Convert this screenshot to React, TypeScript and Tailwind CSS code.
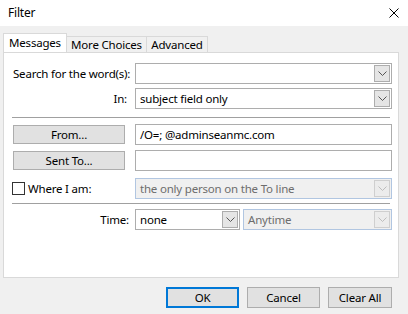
import React from "react";

const Chevron = ({ disabled }: { disabled?: boolean }) => (
  <div
    className={
      "flex h-[17px] w-[16px] items-center justify-center border " +
      (disabled ? "border-[#cfcfcf] bg-[#ececec]" : "border-[#adadad] bg-[#e5e5e5]")
    }
  >
    <svg width="9" height="5" viewBox="0 0 9 5">
      <path d="M0.5 0.5 L4.5 4.5 L8.5 0.5" fill="none" stroke={disabled ? "#bdbdbd" : "#555"} strokeWidth="1" />
    </svg>
  </div>
);

const Combo = ({ text, w, disabled }: { text?: string; w: string; disabled?: boolean }) => (
  <div
    className={
      "flex h-[21px] items-center justify-between border pl-[4px] pr-[1px] " +
      w +
      (disabled ? " border-[#b1c6e1] bg-[#f0f0f0] text-[#6d6d6d]" : " border-[#adadad] bg-white text-black")
    }
  >
    <span className="whitespace-nowrap leading-none">{text}</span>
    <Chevron disabled={disabled} />
  </div>
);

const TextBox = ({ text }: { text?: string }) => (
  <div className="flex h-[21px] w-[257px] items-center border border-[#adadad] bg-white pl-[4px] text-black">
    <span className="whitespace-nowrap leading-none">{text}</span>
  </div>
);

const Btn = ({ label }: { label: string }) => (
  <div className="flex h-[19px] w-[112px] items-center justify-center border border-[#adadad] bg-[#e1e1e1]">
    {label}
  </div>
);

export default function App() {
  return (
    <div
      className="h-[314px] w-[408px] overflow-hidden whitespace-nowrap bg-[#f0f0f0] text-[11.5px] tracking-[-0.2px] text-black"
      style={{ fontFamily: '"Noto Sans", "Open Sans", sans-serif' }}
    >
      <div className="flex h-[26px] items-center justify-between bg-white pl-[8px] pr-[9px]">
        <span className="text-[12px]">Filter</span>
        <svg width="10" height="10" viewBox="0 0 10 10">
          <path d="M0.5 0.5 L9.5 9.5 M9.5 0.5 L0.5 9.5" stroke="#000" strokeWidth="1" />
        </svg>
      </div>
      <div className="pl-[3px] pt-[8px]">
        <div className="relative z-10 flex h-[18px] items-end">
          <div className="flex h-[19px] w-[64px] items-center justify-center border border-b-0 border-[#d9d9d9] bg-white pb-[1px]">
            Messages
          </div>
          <div className="flex h-[16px] w-[80px] items-center justify-center border border-b-0 border-l-0 border-[#d9d9d9]">
            More Choices
          </div>
          <div className="flex h-[16px] w-[61px] items-center justify-center border border-b-0 border-l-0 border-[#d9d9d9]">
            Advanced
          </div>
        </div>
        <div className="h-[226px] w-[396px] border border-[#d9d9d9] bg-white pl-[8px]">
          <div className="mt-[10px] flex h-[21px] items-center">
            <div className="w-[123px] pl-[1px]">Search for the word(s):</div>
            <Combo w="w-[257px]" />
          </div>
          <div className="mt-[4px] flex h-[21px] items-center">
            <div className="w-[123px] pr-[8px] text-right">In:</div>
            <Combo w="w-[257px]" text="subject field only" />
          </div>
          <div className="mt-[8px] h-px w-[378px] bg-[#a0a0a0]" />
          <div className="mt-[6px] flex h-[21px] items-center">
            <div className="w-[123px] pl-[1px]">
              <Btn label="From..." />
            </div>
            <TextBox text="/O=; @adminseanmc.com" />
          </div>
          <div className="mt-[5px] flex h-[21px] items-center">
            <div className="w-[123px] pl-[1px]">
              <Btn label="Sent To..." />
            </div>
            <TextBox />
          </div>
          <div className="mt-[7px] flex h-[21px] items-center">
            <div className="flex w-[123px] items-center">
              <div className="h-[13px] w-[13px] border border-[#333] bg-white" />
              <span className="ml-[3px]">Where I am:</span>
            </div>
            <Combo w="w-[257px]" text="the only person on the To line" disabled />
          </div>
          <div className="mt-[4px] h-px w-[378px] bg-[#a0a0a0]" />
          <div className="mt-[5px] flex h-[21px] items-center">
            <div className="w-[123px] pr-[6px] text-right">Time:</div>
            <Combo w="w-[105px]" text="none" />
            <div className="ml-[3px]">
              <Combo w="w-[149px]" text="Anytime" disabled />
            </div>
          </div>
        </div>
      </div>
      <div className="mt-[9px] flex justify-end gap-[8px] pr-[16px]">
        <div className="flex h-[21px] w-[73px] items-center justify-center border-2 border-[#0078d7] bg-[#e1e1e1]">OK</div>
        <div className="flex h-[21px] w-[73px] items-center justify-center border border-[#adadad] bg-[#e1e1e1]">Cancel</div>
        <div className="flex h-[21px] w-[64px] items-center justify-center border border-[#adadad] bg-[#e1e1e1]">Clear All</div>
      </div>
    </div>
  );
}
